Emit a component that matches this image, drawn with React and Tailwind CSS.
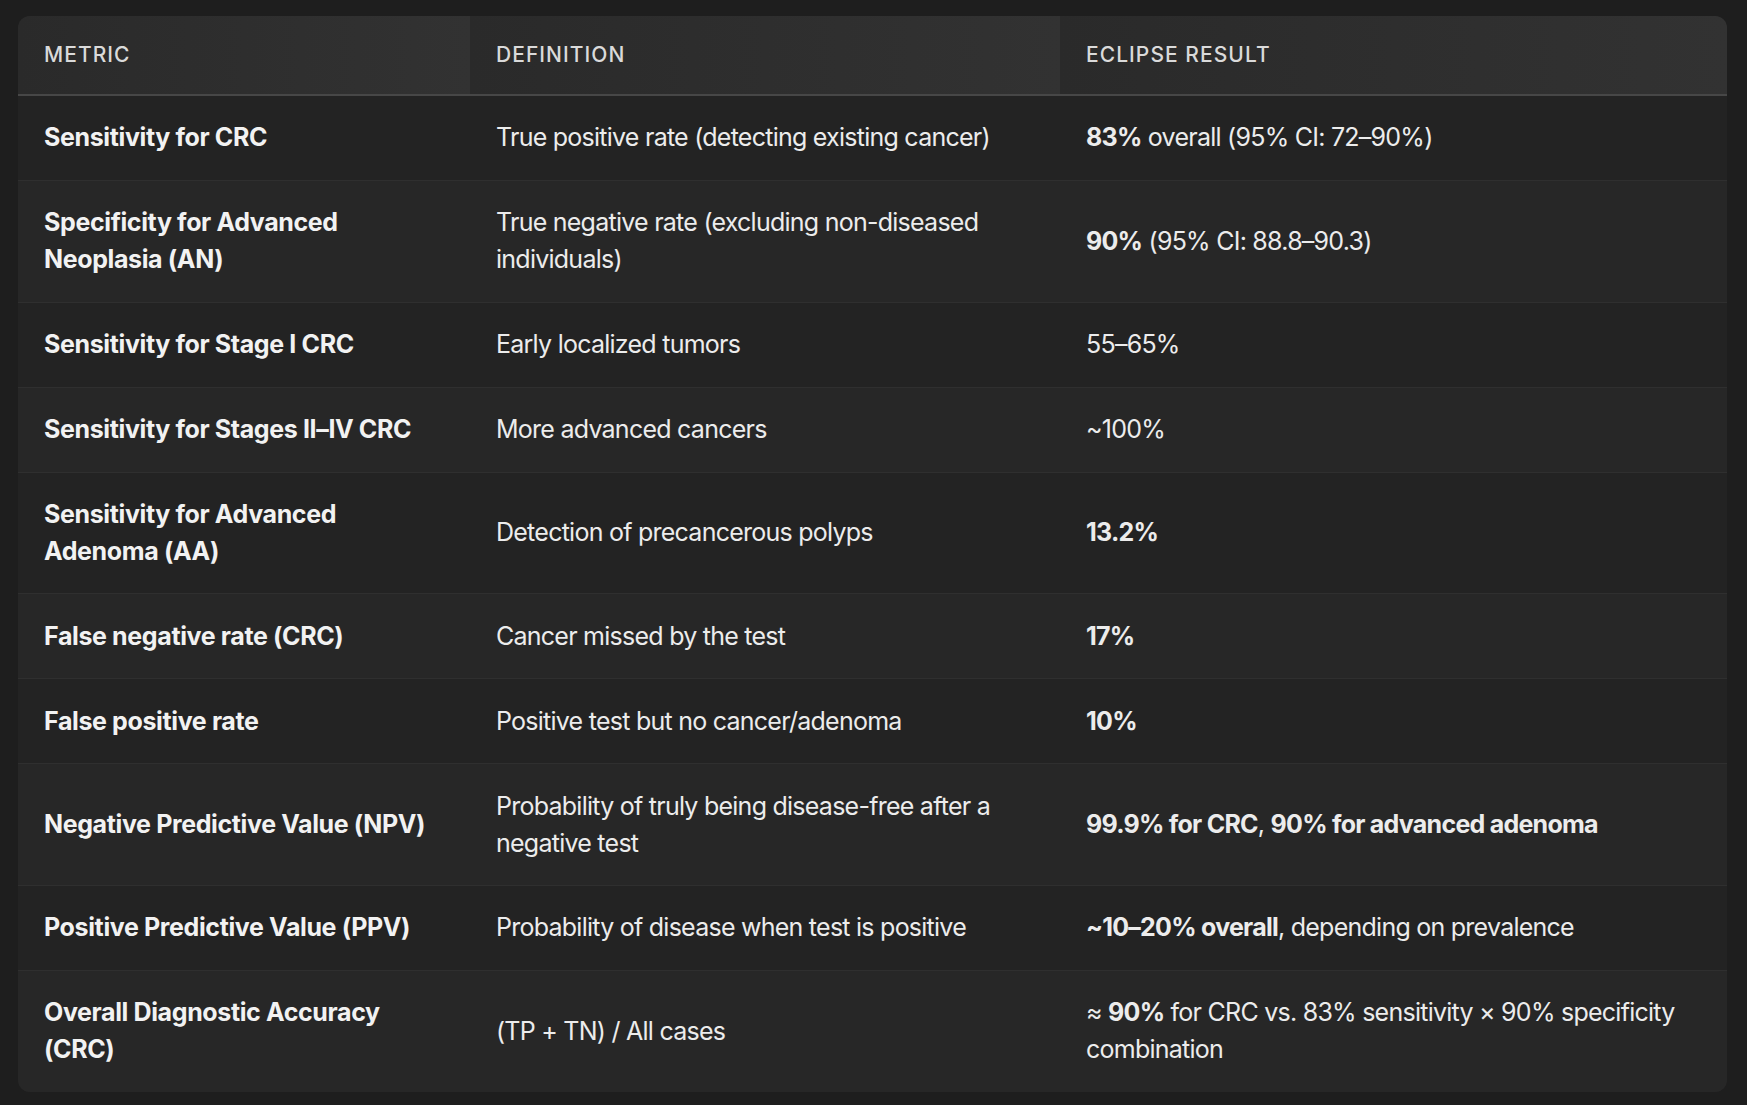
import React from "react";

const rows = [
  {
    m: "Sensitivity for CRC",
    d: "True positive rate (detecting existing cancer)",
    r: (
      <>
        <b className="font-bold">83%</b> overall (95% CI: 72–90%)
      </>
    ),
  },
  {
    m: "Specificity for Advanced Neoplasia (AN)",
    d: "True negative rate (excluding non-diseased individuals)",
    r: (
      <>
        <b className="font-bold">90%</b> (95% CI: 88.8–90.3)
      </>
    ),
  },
  { m: "Sensitivity for Stage I CRC", d: "Early localized tumors", r: <>55–65%</> },
  { m: "Sensitivity for Stages II–IV CRC", d: "More advanced cancers", r: <>~100%</> },
  {
    m: "Sensitivity for Advanced Adenoma (AA)",
    d: "Detection of precancerous polyps",
    r: <b className="font-bold">13.2%</b>,
  },
  { m: "False negative rate (CRC)", d: "Cancer missed by the test", r: <b className="font-bold">17%</b> },
  { m: "False positive rate", d: "Positive test but no cancer/adenoma", r: <b className="font-bold">10%</b> },
  {
    m: "Negative Predictive Value (NPV)",
    d: "Probability of truly being disease-free after a negative test",
    r: (
      <>
        <b className="font-bold">99.9% for CRC</b>, <b className="font-bold">90% for advanced adenoma</b>
      </>
    ),
  },
  {
    m: "Positive Predictive Value (PPV)",
    d: "Probability of disease when test is positive",
    r: (
      <>
        <b className="font-bold">~10–20% overall</b>, depending on prevalence
      </>
    ),
  },
  {
    m: "Overall Diagnostic Accuracy (CRC)",
    d: "(TP + TN) / All cases",
    r: (
      <>
        ≈ <b className="font-bold">90%</b> for CRC vs. 83% sensitivity × 90% specificity combination
      </>
    ),
  },
];

const cols = "grid grid-cols-[452px_590px_667px]";

export default function App() {
  return (
    <div
      className="min-h-[1105px] w-full bg-[#1e1e1e] pt-[16px] pl-[18px]"
      style={{ fontFamily: "Inter, 'Noto Sans', sans-serif" }}
    >
      <div className="w-[1709px] overflow-hidden rounded-[12px] bg-[#242424]">
        <div className={`${cols} h-[80px] border-b-2 border-[#474747]`}>
          {["METRIC", "DEFINITION", "ECLIPSE RESULT"].map((h) => (
            <div
              key={h}
              className="flex items-center bg-linear-to-r from-[#2a2a2a] to-[#323232] pl-[26px] text-[21px] font-medium tracking-[0.05em] text-[#dadada]"
            >
              {h}
            </div>
          ))}
        </div>
        {rows.map((row, i) => (
          <div
            key={i}
            className={`${cols} ${i % 2 === 0 ? "bg-[#232323]" : "bg-[#272727]"} ${
              i < rows.length - 1 ? "border-b border-[#2f2f2f]" : ""
            } text-[25px] leading-[37px] tracking-[-0.03em] text-[#ececec]`}
          >
            <div className="flex items-center py-[23.45px] pl-[26px] pr-[34px] font-bold tracking-[-0.015em] text-[#f2f2f2]">
              {row.m}
            </div>
            <div className="flex items-center py-[23.45px] pl-[26px] pr-[22px]">{row.d}</div>
            <div className="flex items-center py-[23.45px] pl-[26px] pr-[16px]">
              <span>{row.r}</span>
            </div>
          </div>
        ))}
      </div>
    </div>
  );
}
